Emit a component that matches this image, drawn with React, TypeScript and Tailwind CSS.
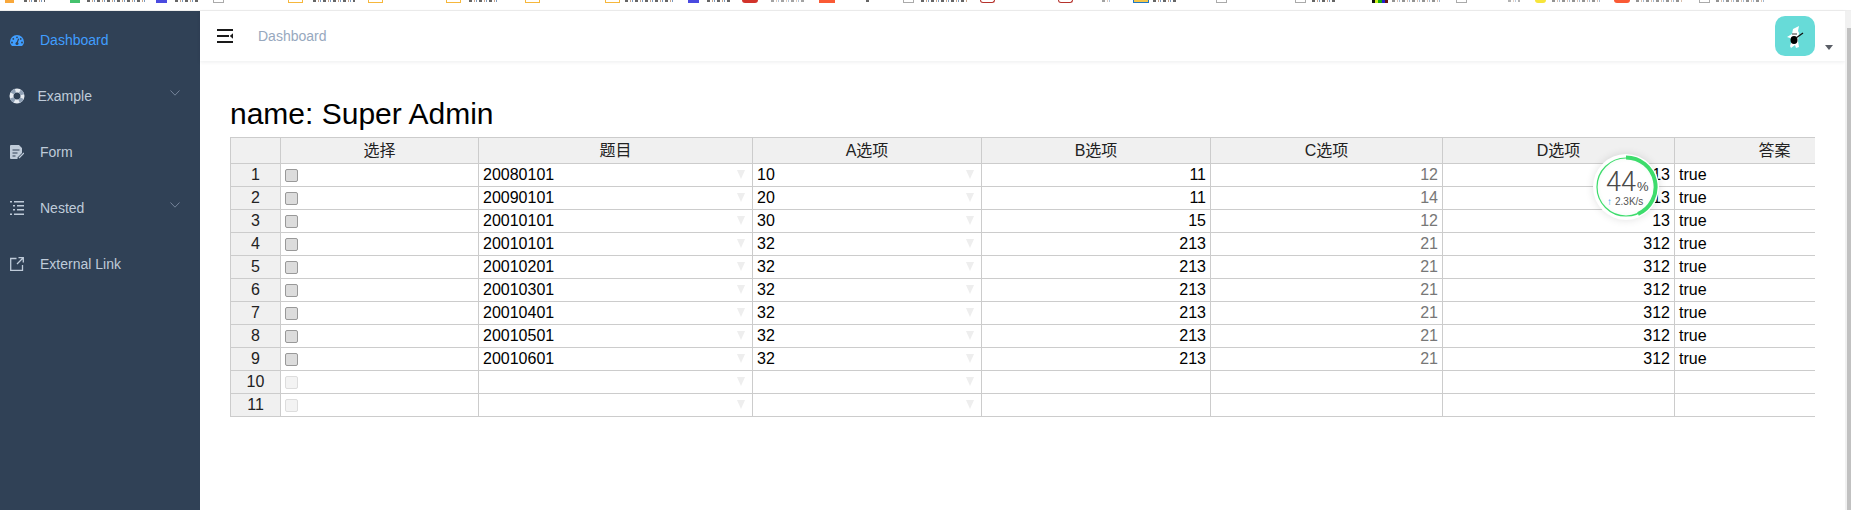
import { ReactNode } from "react";

const FONT = "font-['Liberation_Sans','Noto_Sans_CJK_SC',sans-serif]";

const ROWS: [string, string, string, string, string, string][] = [
  ["20080101", "10", "11", "12", "13", "true"],
  ["20090101", "20", "11", "14", "13", "true"],
  ["20010101", "30", "15", "12", "13", "true"],
  ["20010101", "32", "213", "21", "312", "true"],
  ["20010201", "32", "213", "21", "312", "true"],
  ["20010301", "32", "213", "21", "312", "true"],
  ["20010401", "32", "213", "21", "312", "true"],
  ["20010501", "32", "213", "21", "312", "true"],
  ["20010601", "32", "213", "21", "312", "true"],
  ["", "", "", "", "", ""],
  ["", "", "", "", "", ""],
];

const HEADERS = ["", "选择", "题目", "A选项", "B选项", "C选项", "D选项", "答案"];

// what is left of the browser bookmarks bar, cut off by the capture
function BookmarkStrip() {
  const mark = "h-[3px] shrink-0";
  const folder = "h-[3px] w-[15px] shrink-0 border-x border-b border-[#f6b73c]";
  const box = "h-[3px] w-[11px] shrink-0 border-x border-b border-[#aaa]";
  const label = "h-[2px] shrink-0 bg-[repeating-linear-gradient(90deg,#666_0_3px,transparent_3px_5px,#c9a58a_5px_6px,transparent_6px_7px,#7a9ac0_7px_8px,transparent_8px_10px)]";
  return (
    <div className="flex h-[11px] shrink-0 items-start border-b border-[#eee] bg-white">
      <div className={`${mark} ml-[5px] w-[9px] bg-[#f9a83b]`} />
      <div className={`${label} ml-[10px] w-[21px]`} />
      <div className={`${mark} ml-[25px] w-[10px] bg-[#45c26e]`} />
      <div className={`${label} ml-[7px] w-[58px]`} />
      <div className={`${mark} ml-[11px] w-[11px] bg-[#4a4ae0]`} />
      <div className={`${label} ml-[8px] w-[23px]`} />
      <div className={`${box} ml-[15px]`} />
      <div className={`${folder} ml-[64px]`} />
      <div className={`${label} ml-[10px] w-[42px]`} />
      <div className={`${folder} ml-[13px]`} />
      <div className={`${folder} ml-[63px]`} />
      <div className={`${label} ml-[8px] w-[28px]`} />
      <div className={`${folder} ml-[28px]`} />
      <div className={`${folder} ml-[65px]`} />
      <div className={`${label} ml-[5px] w-[50px]`} />
      <div className={`${mark} ml-[13px] w-[11px] bg-[#4a4ae0]`} />
      <div className={`${label} ml-[8px] w-[23px]`} />
      <div className={`${mark} ml-[12px] w-[16px] rounded-b-full bg-[#d2332b]`} />
      <div className={`${label} ml-[13px] w-[34px] opacity-60`} />
      <div className={`${mark} ml-[14px] w-[16px] bg-[#fa5a35]`} />
      <div className={`${label} ml-[31px] w-[4px]`} />
      <div className={`${box} ml-[33px]`} />
      <div className={`${label} ml-[7px] w-[47px]`} />
      <div className={`${mark} ml-[12px] w-[15px] rounded-b-full border-x border-b border-[#b5322c]`} />
      <div className={`${mark} ml-[63px] w-[15px] rounded-b-full border-x border-b border-[#b5322c]`} />
      <div className={`${label} ml-[29px] w-[10px] opacity-60`} />
      <div className={`${mark} ml-[21px] w-[16px] border-x border-b border-[#1f78c4] bg-[#f3c64a]`} />
      <div className={`${label} ml-[4px] w-[24px]`} />
      <div className={`${box} ml-[39px]`} />
      <div className={`${box} ml-[68px]`} />
      <div className={`${label} ml-[6px] w-[24px]`} />
      <div className={`${mark} ml-[36px] w-[16px] bg-[linear-gradient(90deg,#111_0_20%,#ce2_20%_40%,#1a1_40%_60%,#22c_60%_80%,#611_80%)]`} />
      <div className={`${label} ml-[4px] w-[48px] opacity-70`} />
      <div className={`${box} ml-[16px]`} />
      <div className={`${label} ml-[41px] w-[12px] opacity-50`} />
      <div className={`${mark} ml-[15px] w-[11px] rounded-b-full bg-[#f7e53b]`} />
      <div className={`${label} ml-[6px] w-[48px] opacity-70`} />
      <div className={`${mark} ml-[14px] w-[16px] rounded-b-full bg-[#fa5a35]`} />
      <div className={`${label} ml-[6px] w-[46px] opacity-70`} />
      <div className={`${box} ml-[17px]`} />
      <div className={`${label} ml-[6px] w-[48px] opacity-70`} />
    </div>
  );
}

const Chevron = () => (
  <svg viewBox="0 0 10 6" className="ml-auto mb-[6px] mr-[20px] h-[6px] w-[10px] text-[#75849a]" fill="none" stroke="currentColor" strokeWidth="1">
    <path d="M.5.5 5 5.2 9.5.5" />
  </svg>
);

function MenuItem({ icon, label, active, textClass, arrow }: { icon: ReactNode; label: string; active?: boolean; textClass: string; arrow?: boolean }) {
  return (
    <div className={`flex h-14 items-center pl-[10px] text-sm ${active ? "text-[#409eff]" : "text-[#bfcbd9]"}`}>
      <span className="flex w-[14px] shrink-0 justify-center">{icon}</span>
      <span className={textClass}>{label}</span>
      {arrow && <Chevron />}
    </div>
  );
}

function Sidebar() {
  return (
    <aside className="w-[200px] shrink-0 bg-[#304156] pt-[1px]">
      <MenuItem
        active
        label="Dashboard"
        textClass="ml-[16px]"
        icon={
          <svg viewBox="0 0 14 11" className="h-[11px] w-[14px]">
            <path fill="currentColor" d="M2 11C.7 9.900 0 8.400 0 7a7 7 0 0 1 14 0c0 1.400-.7 2.900-2 4Z" />
            <circle cx="7" cy="2.300" r=".9" fill="#304156" />
            <circle cx="3.300" cy="3.900" r=".9" fill="#304156" />
            <circle cx="10.700" cy="3.900" r=".9" fill="#304156" />
            <circle cx="2" cy="7.500" r=".9" fill="#304156" />
            <circle cx="12" cy="7.500" r=".9" fill="#304156" />
            <path d="M7 8 8.600 3.800" stroke="#304156" strokeWidth="1.200" />
            <circle cx="7" cy="8.400" r="1.500" fill="#304156" />
          </svg>
        }
      />
      <MenuItem
        arrow
        label="Example"
        textClass="ml-[13.5px]"
        icon={
          <svg viewBox="0 0 16 16" className="-ml-[1px] h-4 w-4 shrink-0" fill="none">
            <circle cx="8" cy="8" r="5.500" stroke="#e6ebf1" strokeWidth="4" />
            <circle cx="8" cy="8" r="5.500" stroke="#8fa0b5" strokeWidth="4" strokeDasharray="4 4.640" strokeDashoffset="-2.320" />
          </svg>
        }
      />
      <MenuItem
        label="Form"
        textClass="ml-[16px]"
        icon={
          <svg viewBox="0 0 14 14" className="h-[14px] w-[14px]">
            <path fill="currentColor" d="M1 0h8l3 3v5l-4.500 4.500V14H1a1 1 0 0 1-1-1V1a1 1 0 0 1 1-1Z" />
            <path stroke="#304156" strokeWidth="1.200" d="M2.500 5h7M2.500 8h5M2.500 11h3" />
            <path stroke="currentColor" strokeWidth="1.200" d="m9 13 5-5" />
          </svg>
        }
      />
      <MenuItem
        arrow
        label="Nested"
        textClass="ml-[16px]"
        icon={
          <svg viewBox="0 0 14 14" className="h-[14px] w-[14px]" fill="currentColor">
            <path d="M0 0h2v1.500H0zM4 0h10v1.500H4zM3 4h2v1.500H3zM7 4h7v1.500H7zM3 8h2v1.500H3zM7 8h7v1.500H7zM0 12.500h2V14H0zM4 12.500h10V14H4z" />
          </svg>
        }
      />
      <MenuItem
        label="External Link"
        textClass="ml-[16px]"
        icon={
          <svg viewBox="0 0 14 14" className="h-[14px] w-[14px]" fill="none" stroke="currentColor" strokeWidth="1.300">
            <path d="M6.500 1.500H.7v11.800h11.800V8M7 7l6-6M8.500.7h4.800v4.800" />
          </svg>
        }
      />
    </aside>
  );
}

function Navbar() {
  return (
    <header className="flex h-[50px] shrink-0 items-center bg-white pl-[17px] pr-[12px] shadow-[0_1px_4px_rgba(0,21,41,0.08)]">
      <svg viewBox="0 0 16 14" className="h-[14px] w-4 shrink-0 text-[#1a1a1a]" fill="currentColor">
        <path d="M0 0h16v2H0zM0 6h12v2H0zM0 12h16v2H0zM16 4.200v5.600L12.800 7z" />
      </svg>
      <span className="ml-[25px] text-sm text-[#97a8be]">Dashboard</span>
      <div className="ml-auto h-10 w-10 overflow-hidden rounded-[10px] bg-[#67dbd8]">
        <svg viewBox="0 0 40 40" className="h-10 w-10">
          <path fill="#fff" d="M18 13l6-3-1 5 1 2-1 8 1 6-3 1-1-3-4 3-1-2 2-6-2-2-3-1 5-3z" />
          <ellipse cx="19" cy="24" rx="3.500" ry="4" fill="#000" />
          <path stroke="#111" strokeWidth="1.300" d="M21 22l7-5" />
          <path stroke="#333" strokeWidth="1" d="M17 18h5" />
        </svg>
      </div>
      <span className="ml-[10px] mt-[22px] h-0 w-0 border-x-[4px] border-t-[5px] border-x-transparent border-t-[#5a5e66]" />
    </header>
  );
}

const cell = "h-[23px] border-b border-r border-[#ccc] px-[4px] pt-0 pb-[1px] text-[16px] leading-[21px] overflow-hidden whitespace-nowrap";

function DropCell({ value }: { value: string }) {
  return (
    <td className={cell}>
      <div className="flex items-center justify-between">
        <span className="h-[21px]">{value}</span>
        <span className="mr-[3px] h-0 w-0 border-x-[4px] border-t-[9px] border-x-transparent border-t-[#eee]" />
      </div>
    </td>
  );
}

function DataTable() {
  const widths = ["w-[50px]", "w-[198px]", "w-[274px]", "w-[229px]", "w-[229px]", "w-[232px]", "w-[232px]", "w-[200px]"];
  return (
    <div className="w-[1585px] overflow-hidden">
      <table className="w-[1644px] table-fixed border-separate border-spacing-0 border-l border-t border-[#ccc] text-black">
        <colgroup>
          {widths.map((w, i) => (
            <col key={i} className={w} />
          ))}
        </colgroup>
        <thead>
          <tr>
            {HEADERS.map((h, i) => (
              <th key={i} className="h-[26px] border-b border-r border-[#ccc] bg-[#f0f0f0] p-0 text-center text-[16px] font-normal leading-[24px] text-[#222]">
                {h}
              </th>
            ))}
          </tr>
        </thead>
        <tbody>
          {ROWS.map((r, i) => {
            const empty = r[0] === "";
            return (
              <tr key={i}>
                <td className={`${cell} bg-[#f0f0f0] text-center text-[#222]`}>{i + 1}</td>
                <td className={cell}>
                  <input
                    type="checkbox"
                    readOnly
                    className={`mt-[1px] block h-[13px] w-[13px] appearance-none rounded-[2px] border ${empty ? "border-[#ddd] bg-[#f3f3f3]" : "border-[#999] bg-[#dcdcdc]"}`}
                  />
                </td>
                <DropCell value={r[0]} />
                <DropCell value={r[1]} />
                <td className={`${cell} text-right`}>{r[2]}</td>
                <td className={`${cell} text-right text-[#777]`}>{r[3]}</td>
                <td className={`${cell} text-right`}>{r[4]}</td>
                <td className={cell}>{r[5]}</td>
              </tr>
            );
          })}
        </tbody>
      </table>
    </div>
  );
}

// floating network speed ball from a browser extension
function SpeedBall() {
  return (
    <div className="absolute left-[1593px] top-[154px] h-[66px] w-[66px] rounded-full bg-white shadow-[0_0_8px_rgba(0,0,0,0.12)]">
      <div className="absolute inset-[4px] rounded-full bg-[radial-gradient(circle,#ffffff_60%,#dff5e5_100%)]" />
      <svg viewBox="0 0 66 66" className="absolute inset-0 h-[66px] w-[66px]" fill="none">
        <circle cx="33" cy="33" r="29" stroke="#3ddc6c" strokeWidth="1.200" />
        <path d="M33 3.500A29.500 29.500 0 0 1 45 60" stroke="#3ddc6c" strokeWidth="4" />
      </svg>
      <div className="absolute left-[13px] top-[13px] flex items-baseline text-[#4a4a4a]">
        <span className="font-['Roboto',sans-serif] text-[27px] font-light leading-[30px]">44</span>
        <span className="ml-[1px] text-[13px] leading-none">%</span>
      </div>
      <div className="absolute left-[14px] top-[42px] flex items-center text-[10px] leading-[12px] text-[#555]">
        <span className="mr-[3px] text-[10px] font-bold text-[#3c9cf0]">↑</span>2.3K/s
      </div>
    </div>
  );
}

export default function App() {
  return (
    <div className={`${FONT} relative flex h-[510px] w-[1851px] flex-col overflow-hidden bg-white`}>
      <BookmarkStrip />
      <div className="flex min-h-0 flex-1">
        <Sidebar />
        <main className="flex min-w-0 flex-1 flex-col">
          <Navbar />
          <div className="pl-[30px] pt-[35px]">
            <h1 className="h-[41px] text-[30px] leading-[36px] text-black">name: Super Admin</h1>
            <DataTable />
          </div>
        </main>
        {/* page scrollbar */}
        <div className="flex w-[6px] shrink-0 flex-col bg-[#f1f1f1]">
          <div className="mt-[17px] ml-[2px] flex-1 bg-[#c1c1c1]" />
        </div>
      </div>
      <SpeedBall />
    </div>
  );
}
